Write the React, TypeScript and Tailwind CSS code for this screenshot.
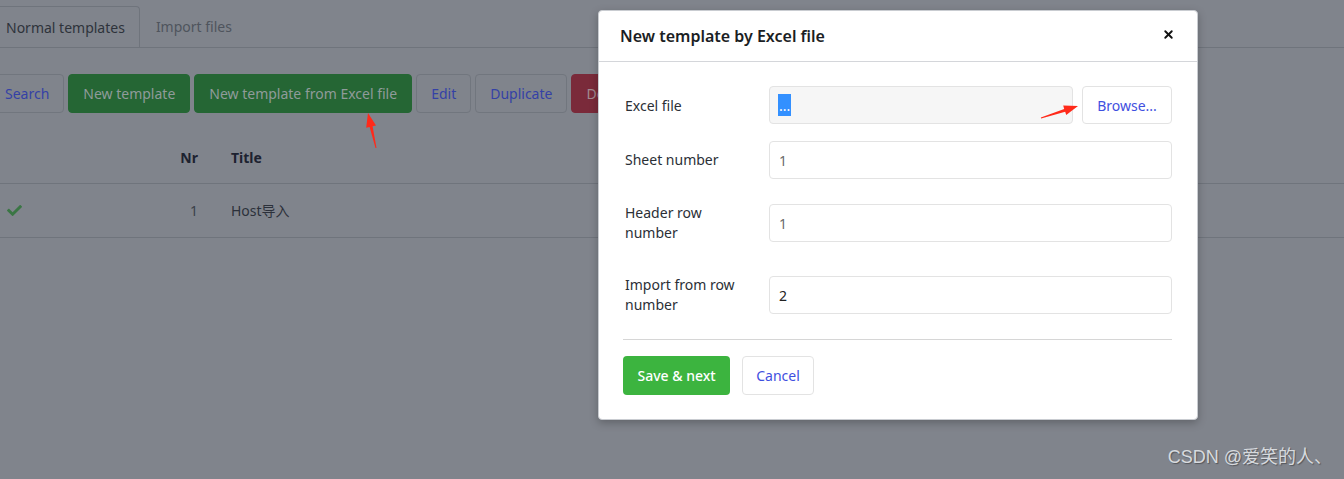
import { X } from 'lucide-react'
import { FaCheck } from 'react-icons/fa'

const font = { fontFamily: '"Noto Sans", "Noto Sans CJK SC", sans-serif' }

function PageButton({ label, kind }: { label: string; kind: 'plain' | 'green' | 'red' }) {
  const cls =
    kind === 'green'
      ? 'bg-[#256634] border-[#256634] text-[#8f9b9a]'
      : kind === 'red'
        ? 'bg-[#7a2a3a] border-[#7a2a3a] text-[#a08a92]'
        : 'bg-[#80848c] border-[#71767e] text-[#3441a6]'
  return (
    <div className={`h-[39px] px-[14px] flex items-center rounded-[4px] border text-[14px] whitespace-nowrap ${cls}`}>
      {label}
    </div>
  )
}

function Background() {
  return (
    <div className="w-full">
      {/* Tabs */}
      <div className="pt-[6px] flex border-b border-[#6f747c] text-[14px]">
        <div className="ml-[-9px] h-[41px] px-[14px] flex items-center border border-b-0 border-[#6f747c] rounded-t-[4px] bg-[#80848c] mb-[-1px] text-[#2e333b]">
          Normal templates
        </div>
        <div className="h-[41px] px-[16px] flex items-center text-[#4f545d]">Import files</div>
      </div>

      {/* Toolbar */}
      <div className="mt-[26px] ml-[-10px] flex gap-[4px]">
        <PageButton label="Search" kind="plain" />
        <PageButton label="New template" kind="green" />
        <PageButton label="New template from Excel file" kind="green" />
        <PageButton label="Edit" kind="plain" />
        <PageButton label="Duplicate" kind="plain" />
        <PageButton label="Delete" kind="red" />
      </div>

      {/* Table */}
      <div className="mt-[18px] text-[14px]">
        <div className="h-[53px] flex items-center border-b border-[#6f747c] font-bold text-[#1d2230]">
          <div className="w-[158px]" />
          <div className="w-[40px] text-right">Nr</div>
          <div className="ml-[33px]">Title</div>
        </div>
        <div className="h-[54px] flex items-center border-b border-[#6f747c] text-[#2c313b]">
          <div className="w-[158px] pl-[7px]">
            <FaCheck size={15} className="text-[#3a7644]" />
          </div>
          <div className="w-[40px] text-right text-[#3b4049]">1</div>
          <div className="ml-[33px]">Host导入</div>
        </div>
      </div>
    </div>
  )
}

function Field({ label, value, muted, className }: { label: React.ReactNode; value: string; muted?: boolean; className?: string }) {
  return (
    <div className={`flex items-center ${className ?? ''}`}>
      <div className="w-[146px] pl-[2px] text-[14px] leading-[20px] text-[#2b2f36]">{label}</div>
      <div className="flex-1 h-[38px] px-[9px] flex items-center border border-[#e3e3e3] rounded-[4px] text-[14px] bg-white">
        <span className={muted ? 'text-[#6b6b6b]' : 'text-[#222]'}>{value}</span>
      </div>
    </div>
  )
}

function Modal() {
  return (
    <div className="absolute left-[598px] top-[10px] w-[600px] bg-white rounded-[4px] border border-[#c9ccd1] shadow-[0_3px_8px_rgba(0,0,0,0.25)]">
      <div className="h-[51px] flex items-center justify-between pl-[21px] pr-[22px] border-b border-[#d4d6da]">
        <div className="text-[16px] font-semibold text-[#1b1e24]">New template by Excel file</div>
        <X size={13} strokeWidth={3.5} className="text-[#111] mt-[-4px]" />
      </div>
      <div className="pl-[24px] pr-[25px] pt-[24px] pb-[24px]">
        <div className="flex items-center">
          <div className="w-[146px] pl-[2px] text-[14px] text-[#2b2f36]">Excel file</div>
          <div className="flex-1 h-[38px] px-[8px] flex items-center bg-[#f6f6f6] border border-[#e3e3e3] rounded-[4px]">
            <span className="bg-[#3390ff] text-white text-[14px] leading-[20px] px-[1px] pt-[2px]">...</span>
          </div>
          <div className="ml-[9px] h-[38px] w-[90px] flex items-center justify-center border border-[#e3e3e3] rounded-[4px] text-[14px] text-[#3f4fe0]">
            Browse...
          </div>
        </div>
        <Field className="mt-[17px]" label="Sheet number" value="1" muted />
        <Field className="mt-[24px]" label={<>Header row<br />number</>} value="1" muted />
        <Field className="mt-[32px]" label={<>Import from row<br />number</>} value="2" />
        <div className="mt-[24px] border-t border-[#d6d6d6]" />
        <div className="mt-[16px] flex gap-[12px]">
          <div className="h-[39px] px-[14.5px] flex items-center rounded-[4px] bg-[#3cb43f] text-white text-[14px] font-medium">
            Save &amp; next
          </div>
          <div className="h-[39px] px-[13px] flex items-center rounded-[4px] border border-[#e3e3e3] text-[#3f4fe0] text-[14px]">
            Cancel
          </div>
        </div>
      </div>
    </div>
  )
}

export default function App() {
  return (
    <div className="relative w-[1344px] h-[479px] overflow-hidden bg-[#80848c]" style={font}>
      <Background />
      <Modal />

      {/* annotation arrows */}
      <svg className="absolute left-[355px] top-[108px]" width="30" height="45" viewBox="0 0 30 45">
        <polygon points="13,5 21,17.5 17.6,18.3 21.5,40 20.5,40 14.6,18.9 11.2,19.7" fill="#ff2a1a" />
      </svg>
      <svg className="absolute left-[1036px] top-[98px]" width="48" height="26" viewBox="0 0 48 26">
        <polygon points="42,8 30.2,17.1 29.2,13.7 5.15,20.5 4.85,19.5 28.2,10.9 27.2,7.55" fill="#ff2a1a" />
      </svg>

      <div
        className="absolute right-[12px] bottom-[8px] text-[18px] text-[#d7dade] [text-shadow:1px_1px_1px_rgba(0,0,0,0.35)]"
        style={{ fontFamily: '"Liberation Sans", "Noto Sans CJK SC", sans-serif' }}
      >
        CSDN @爱笑的人、
      </div>
    </div>
  )
}
